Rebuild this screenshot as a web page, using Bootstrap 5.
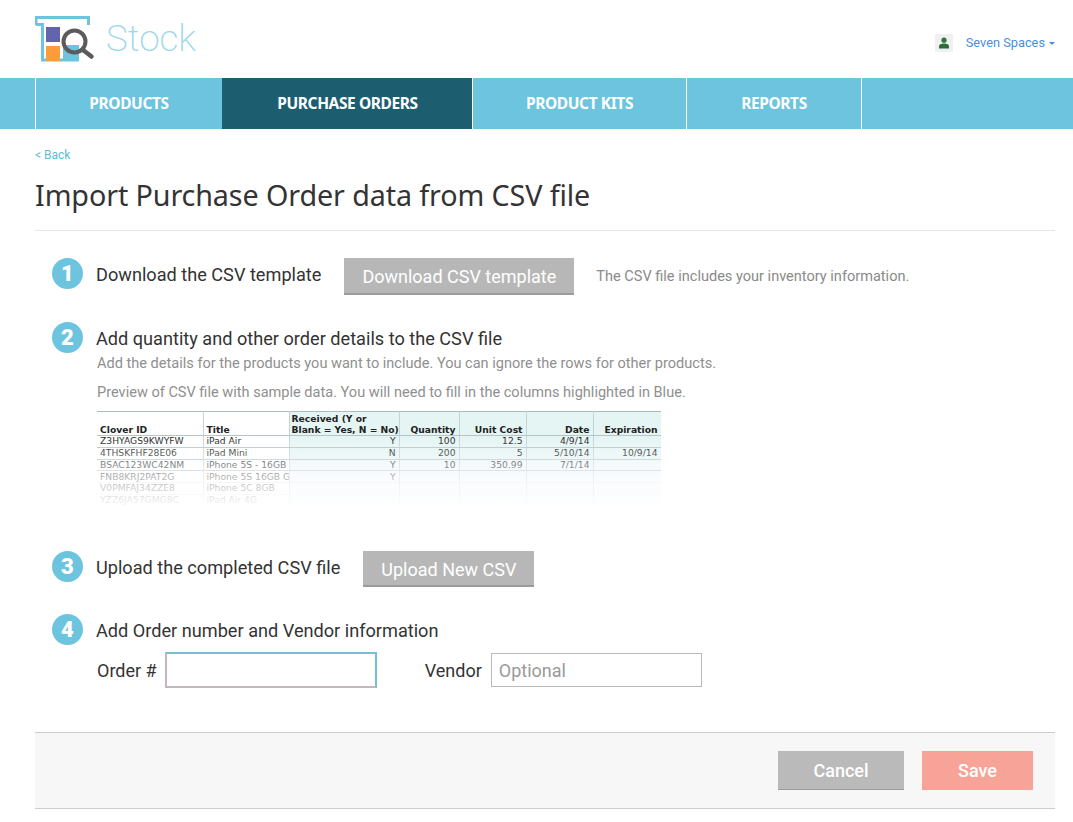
<!DOCTYPE html>
<html lang="en">
<head>
<meta charset="utf-8">
<title>Import Purchase Order</title>
<link href="https://cdn.jsdelivr.net/npm/bootstrap@5.3.0/dist/css/bootstrap.min.css" rel="stylesheet">
<style>
body{font-family:Roboto,"Liberation Sans",sans-serif;color:#333;background:#fff;min-height:822px}
.top-head{height:78px;padding:0 18px 0 35px}
.brand-text{font-family:Roboto,sans-serif;font-weight:200;font-size:36.8px;color:#9ad7e9;line-height:1;margin-left:11px}
.user-side{padding-top:8px}
.user-ico{width:18px;height:18px;background:#f0f0f0}
.user-link{font-size:12.8px;color:#4a90d9;text-decoration:none;margin-left:13px}
.user-caret{width:0;height:0;border-left:3px solid transparent;border-right:3px solid transparent;border-top:3px solid #4a90d9;margin-left:4px}
.main-nav{height:51px;background:#6dc4de;padding-left:35px}
.main-link{font-family:"Noto Sans",sans-serif;font-weight:700;font-size:15.5px;letter-spacing:-.4px;color:#fff;text-decoration:none;border-left:1px solid #fff;height:51px}
.main-link:last-child{border-right:1px solid #fff}
.main-link.on{background:#1c5d70;border-left-color:#1c5d70}
.w-products{width:187px}.w-po{width:250px}.w-kits{width:214px}.w-reports{width:176px}
.page-wrap{padding:0 18px 0 35px}
.back-link{font-size:12px;color:#5bbcd9;text-decoration:none;display:block;margin-top:18px;line-height:16px}
.page-title{font-family:"Noto Sans",sans-serif;font-size:28.7px;font-weight:400;color:#333;margin:12px 0 0;line-height:40px;letter-spacing:-.1px;padding-bottom:15px;border-bottom:1px solid #e5e5e5}
.step-num{width:31px;height:31px;border-radius:50%;background:#6dc4de;color:#fff;font-weight:900;font-size:22px;line-height:31px;text-align:center;margin-left:17px;margin-right:13px;flex:none;font-family:Roboto,sans-serif}
.step-title{font-size:18.15px;color:#333;line-height:31px;padding-top:1px;white-space:nowrap}
.step-one{margin-top:27px;height:37px}
.step-two{margin-top:27px}
.step-three{margin-top:46px;height:36px}
.step-four{margin-top:27px}
.after-title{margin-left:23px}
.flat-btn{background:#b7b7b7;color:#fff;font-size:18px;border:0;border-bottom:2px solid #9b9b9b;border-radius:0;height:37px;padding:3px 18px 0;line-height:32px}
.step-three .flat-btn{height:36px;margin-left:23px}
.hint-side{font-size:14.55px;color:#8a8a8a;margin-left:22px;align-self:center}
.sub-hint{font-size:14.55px;color:#8f8f8f;margin-left:62px;line-height:20px}
.sub-hint.one{margin-top:0}
.sub-hint.two{margin-top:9px}
.sheet-box{margin:8px 0 0 62px;width:564px;height:94px;position:relative;overflow:hidden}
.sheet-fade{position:absolute;left:0;right:0;bottom:0;height:70px;background:linear-gradient(to bottom,rgba(255,255,255,0) 0,rgba(255,255,255,.25) 25%,rgba(255,255,255,.65) 60%,rgba(255,255,255,.95) 100%)}
.sheet{table-layout:fixed;border-collapse:collapse;width:564px;font-family:"DejaVu Sans",sans-serif;font-size:9.2px;line-height:10.5px;color:#222;border-top:1px solid #aeb9c4}
.sheet th,.sheet td{border-right:1px solid #c6d3d6;border-bottom:1px solid #b5c4c8;padding:0 3px;white-space:nowrap;overflow:hidden;height:11.8px}
.sheet th{font-weight:700;vertical-align:bottom;height:24px;font-size:9.2px;line-height:11px;padding-bottom:0}
.sheet .fill{background:#e5f5f4;text-align:right}
.sheet th.first-fill{text-align:left;padding:0 0 0 2px}
.sheet tr.low .fill{background:#eef5fc}
.sheet tr.faint td{border-bottom-color:#dde3e8}
.form-row-own{margin:6px 0 0 62px}
.field-label{font-size:18px;color:#333;white-space:nowrap}
.field{height:34px;width:211px;border:1px solid #b9b9b9;border-radius:0;font-size:18px;padding:0 7px;font-family:Roboto,sans-serif;margin-left:9px}
.field::placeholder{color:#9a9a9a}
.field.active{height:36px;width:212px;margin-left:8px;border:2px solid #76bfd7;border-left-color:#c3b6bf;border-bottom-color:#c3b6bf;outline:0}
.field.short{margin-left:9px}
.gap-vendor{margin-left:48px}
.foot-bar{margin-top:44px;height:77px;background:#f7f7f7;border-top:1px solid #ccc;border-bottom:1px solid #ccc;padding-right:22px}
.foot-btn{height:39px;font-size:18px;font-weight:500;color:#fff;border:0;border-radius:0;padding:0}
.foot-cancel{background:#bababa;border-bottom:1px solid #9b9b9b;width:126px;margin-right:18px}
.foot-save{background:#f8a398;width:111px}
</style>
</head>
<body>
<header class="top-head d-flex align-items-center justify-content-between">
  <div class="d-flex align-items-center">
    <svg width="60" height="48" viewBox="35 15 60 48" aria-hidden="true">
      <path d="M36 25V17.5H88.5V25M36 24.5H42.5V60H79" fill="none" stroke="#6dc4de" stroke-width="3"/>
      <rect x="46" y="27" width="14" height="15" fill="#6264ad"/>
      <rect x="46" y="46" width="14" height="15" fill="#fb9d3b"/>
      <rect x="63" y="45" width="16" height="16" fill="#6dc4de"/>
      <circle cx="74.5" cy="41.5" r="11" fill="none" stroke="#5b5b5b" stroke-width="4"/>
      <path d="M83 50L91.5 56.5" stroke="#5b5b5b" stroke-width="4.5" stroke-linecap="round"/>
    </svg>
    <span class="brand-text">Stock</span>
  </div>
  <div class="user-side d-flex align-items-center">
    <span class="user-ico d-flex align-items-center justify-content-center">
      <svg width="12" height="12" viewBox="0 0 12 12" aria-hidden="true"><circle cx="6" cy="3.2" r="2.6" fill="#2c7a3b"/><path d="M1 11.5V9.2C1 7.6 3 6.6 6 6.6S11 7.6 11 9.2V11.5Z" fill="#2c6b3a"/></svg>
    </span>
    <a class="user-link" href="#">Seven Spaces</a>
    <span class="user-caret"></span>
  </div>
</header>
<nav class="main-nav d-flex">
  <a class="main-link w-products d-flex align-items-center justify-content-center" href="#">PRODUCTS</a>
  <a class="main-link w-po on d-flex align-items-center justify-content-center" href="#">PURCHASE ORDERS</a>
  <a class="main-link w-kits d-flex align-items-center justify-content-center" href="#">PRODUCT KITS</a>
  <a class="main-link w-reports d-flex align-items-center justify-content-center" href="#">REPORTS</a>
</nav>
<main class="page-wrap">
  <a class="back-link" href="#">&lt; Back</a>
  <h1 class="page-title">Import Purchase Order data from CSV file</h1>

  <div class="step-one d-flex align-items-start">
    <span class="step-num">1</span>
    <span class="step-title">Download the CSV template</span>
    <button class="btn flat-btn after-title" type="button">Download CSV template</button>
    <span class="hint-side">The CSV file includes your inventory information.</span>
  </div>

  <div class="step-two d-flex align-items-start">
    <span class="step-num">2</span>
    <span class="step-title">Add quantity and other order details to the CSV file</span>
  </div>
  <div class="sub-hint one">Add the details for the products you want to include. You can ignore the rows for other products.</div>
  <div class="sub-hint two">Preview of CSV file with sample data. You will need to fill in the columns highlighted in Blue.</div>
  <div class="sheet-box">
    <table class="sheet">
      <colgroup><col style="width:106px"><col style="width:86px"><col style="width:110px"><col style="width:60px"><col style="width:67px"><col style="width:67px"><col style="width:68px"></colgroup>
      <tr><th>Clover ID</th><th>Title</th><th class="fill first-fill">Received (Y or<br>Blank = Yes, N = No)</th><th class="fill">Quantity</th><th class="fill">Unit Cost</th><th class="fill">Date</th><th class="fill">Expiration</th></tr>
      <tr><td>Z3HYAGS9KWYFW</td><td>iPad Air</td><td class="fill">Y</td><td class="fill">100</td><td class="fill">12.5</td><td class="fill">4/9/14</td><td class="fill"></td></tr>
      <tr><td>4THSKFHF28E06</td><td>iPad Mini</td><td class="fill">N</td><td class="fill">200</td><td class="fill">5</td><td class="fill">5/10/14</td><td class="fill">10/9/14</td></tr>
      <tr class="low"><td>BSAC123WC42NM</td><td>iPhone 5S - 16GB</td><td class="fill">Y</td><td class="fill">10</td><td class="fill">350.99</td><td class="fill">7/1/14</td><td class="fill"></td></tr>
      <tr class="low faint"><td>FNB8KRJ2PAT2G</td><td>iPhone 5S 16GB G</td><td class="fill">Y</td><td class="fill"></td><td class="fill"></td><td class="fill"></td><td class="fill"></td></tr>
      <tr class="low faint"><td>V0PMFAJ34ZZE8</td><td>iPhone 5C 8GB</td><td class="fill"></td><td class="fill"></td><td class="fill"></td><td class="fill"></td><td class="fill"></td></tr>
      <tr class="low faint"><td>YZZ6JA57GMG8C</td><td>iPad Air 4G</td><td class="fill"></td><td class="fill"></td><td class="fill"></td><td class="fill"></td><td class="fill"></td></tr>
    </table>
    <div class="sheet-fade"></div>
  </div>

  <div class="step-three d-flex align-items-start">
    <span class="step-num">3</span>
    <span class="step-title">Upload the completed CSV file</span>
    <button class="btn flat-btn" type="button">Upload New CSV</button>
  </div>

  <div class="step-four d-flex align-items-start">
    <span class="step-num">4</span>
    <span class="step-title">Add Order number and Vendor information</span>
  </div>
  <div class="form-row-own d-flex align-items-center">
    <label class="field-label" for="order-no">Order #</label>
    <input class="field active" id="order-no" type="text">
    <label class="field-label gap-vendor" for="vendor">Vendor</label>
    <input class="field short" id="vendor" type="text" placeholder="Optional">
  </div>

  <div class="foot-bar d-flex align-items-center justify-content-end">
    <button class="btn foot-btn foot-cancel" type="button">Cancel</button>
    <button class="btn foot-btn foot-save" type="button">Save</button>
  </div>
</main>
<script src="https://cdn.jsdelivr.net/npm/bootstrap@5.3.0/dist/js/bootstrap.bundle.min.js"></script>
</body>
</html>
